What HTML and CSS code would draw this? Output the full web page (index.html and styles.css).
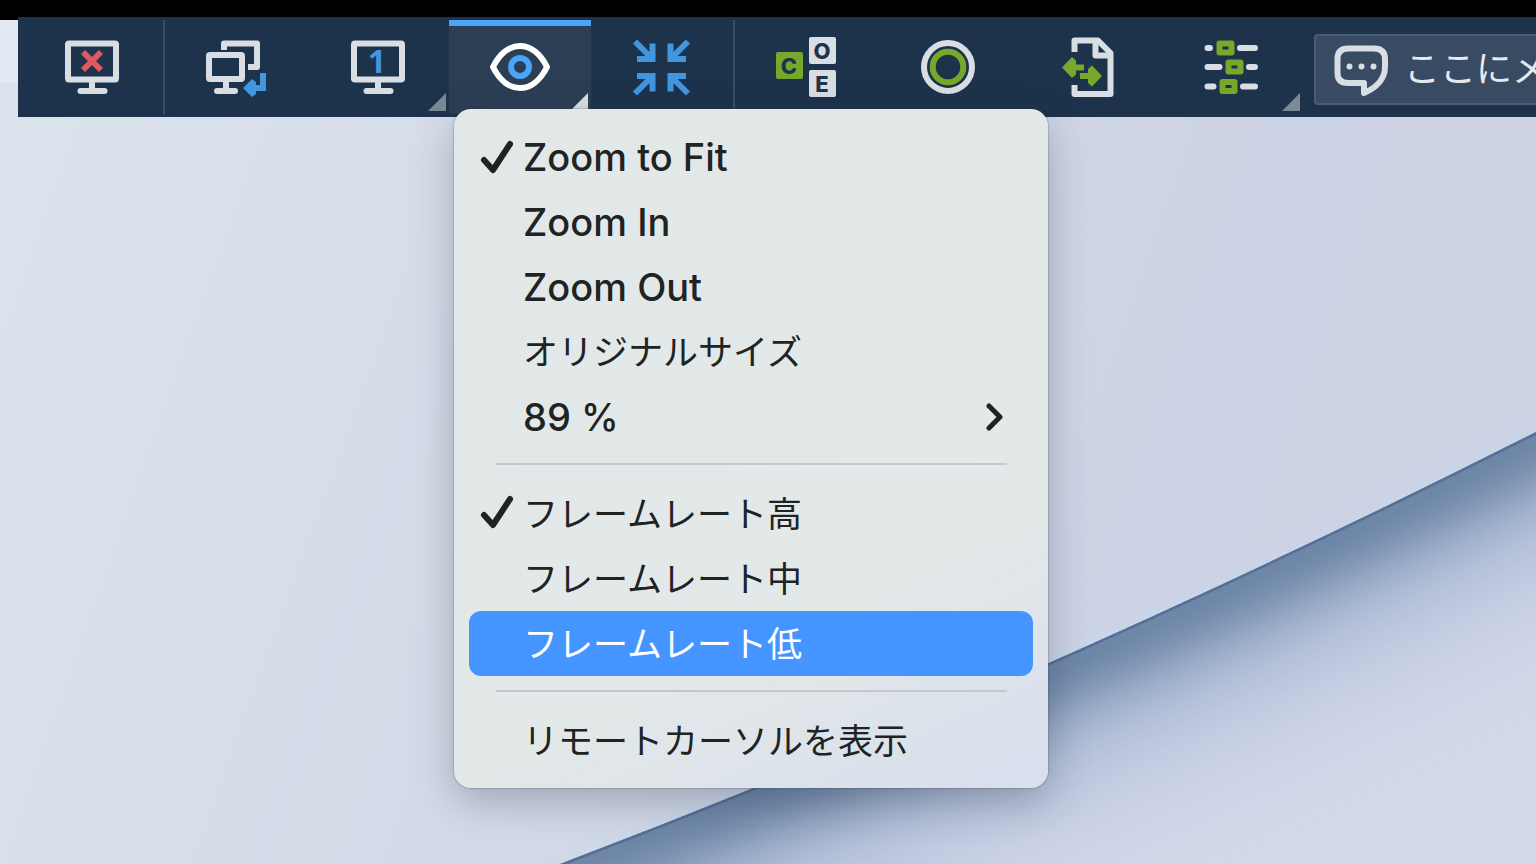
FILE: index.html
```html
<!DOCTYPE html>
<html lang="ja">
<head>
    <meta charset="UTF-8">
    <meta name="viewport" content="width=device-width, initial-scale=1.0">
    <title>Remote Control</title>
    <link rel="stylesheet" href="styles.css">
</head>
<body>
    <svg class="wallpaper" viewBox="0 0 1536 864" preserveAspectRatio="none" aria-hidden="true">
        <defs>
            <linearGradient id="sky" x1="0" y1="0.3" x2="1" y2="0.5">
                <stop offset="0" stop-color="#dae2ec"/>
                <stop offset="0.5" stop-color="#d2d9e7"/>
                <stop offset="0.8" stop-color="#ccd2e5"/>
                <stop offset="1" stop-color="#ccd1e4"/>
            </linearGradient>
            <filter id="soft" filterUnits="userSpaceOnUse" x="0" y="0" width="1900" height="1200"><feGaussianBlur stdDeviation="5"/></filter>
            <filter id="shade" filterUnits="userSpaceOnUse" x="0" y="0" width="1900" height="1200" color-interpolation-filters="sRGB"><feGaussianBlur stdDeviation="36"/></filter>
            <filter id="wide" filterUnits="userSpaceOnUse" x="0" y="0" width="1900" height="1200" color-interpolation-filters="sRGB"><feGaussianBlur stdDeviation="65"/></filter>
            <clipPath id="hill"><path d="M360 940L560 864Q1047 679 1536 432L1736 331V1000H360z"/></clipPath>
        </defs>
        <rect width="1536" height="864" fill="url(#sky)"/>
        <rect width="18" height="83" fill="#e3e9f4"/>
        <path d="M360 940L560 864Q1047 679 1536 432L1736 331" fill="none" stroke="#c8d8ec" stroke-width="10" opacity="0.7" filter="url(#soft)"/>
        <g clip-path="url(#hill)" fill="none">
            <rect x="360" y="300" width="1300" height="700" fill="#d3d8ea"/>
            <path d="M360 940L560 864Q1047 679 1536 432L1736 331" stroke="#a6b6d2" stroke-width="220" filter="url(#wide)"/>
            <path d="M360 940L560 864Q1047 679 1536 432L1736 331" stroke="#4d6b8e" stroke-width="66" filter="url(#shade)"/>
            <path d="M360 940L560 864Q1047 679 1536 432L1736 331" stroke="#4a6690" stroke-width="5" opacity="0.7"/>
        </g>
    </svg>

    <div class="screen-edge"></div>

    <div class="toolbar" role="toolbar">
        <button class="tool" aria-label="Disconnect">
            <svg class="icon" viewBox="0 0 60 60">
                <rect class="line" x="6" y="6.500" width="48" height="36" rx="1"/>
                <path class="line" d="M30 44v8"/>
                <path class="line round" d="M18.500 54h24"/>
                <path class="line red" d="M21 15l18 18M39 15L21 33"/>
            </svg>
        </button>
        <span class="divider"></span>
        <button class="tool" aria-label="Switch screen">
            <svg class="icon" viewBox="0 0 60 60">
                <path class="line" d="M18 13V6.500H51V30H42"/>
                <rect class="line" x="3" y="18" width="33" height="24" rx="1"/>
                <path class="line" d="M20 44v8"/>
                <path class="line round" d="M11 54h18"/>
                <path class="fill-blue" d="M37 51l9-9 4 3v3h4V36h6v18H50v3l-4 3z"/>
            </svg>
        </button>
        <button class="tool" aria-label="Monitor 1">
            <svg class="icon" viewBox="0 0 60 60">
                <rect class="line" x="6" y="6.500" width="48" height="36" rx="1"/>
                <path class="line" d="M30 44v8"/>
                <path class="line round" d="M18.500 54h24"/>
                <text class="digit" x="29" y="36">1</text>
            </svg>
            <span class="corner"></span>
        </button>
        <div class="tool-menu">
            <button class="tool active" aria-label="View" aria-haspopup="menu" aria-expanded="true">
                <svg class="icon" viewBox="0 0 60 60">
                    <path class="line white" d="M3 30C10 16 20 9 30 9S50 16 57 30C50 44 40 51 30 51S10 44 3 30z"/>
                    <circle class="line bright" cx="30" cy="30" r="9"/>
                </svg>
                <span class="corner"></span>
            </button>
            <div class="menu" role="menu">
                <button class="item" role="menuitemradio" aria-checked="true">
                    <span class="mark"><svg viewBox="0 0 34 34"><path d="M4 20l9 10L30 4"/></svg></span>Zoom to Fit
                </button>
                <button class="item" role="menuitem"><span class="mark"></span>Zoom In</button>
                <button class="item" role="menuitem"><span class="mark"></span>Zoom Out</button>
                <button class="item ja" role="menuitem"><span class="mark"></span>オリジナルサイズ</button>
                <button class="item" role="menuitem">
                    <span class="mark"></span>89 %
                    <svg class="chevron" viewBox="0 0 18 30"><path d="M3 4l11 11L3 26"/></svg>
                </button>
                <hr class="separator">
                <button class="item ja" role="menuitemradio" aria-checked="true">
                    <span class="mark"><svg viewBox="0 0 34 34"><path d="M4 20l9 10L30 4"/></svg></span>フレームレート高
                </button>
                <button class="item ja" role="menuitemradio" aria-checked="false"><span class="mark"></span>フレームレート中</button>
                <button class="item ja selected" role="menuitemradio" aria-checked="false"><span class="mark"></span>フレームレート低</button>
                <hr class="separator">
                <button class="item ja" role="menuitem"><span class="mark"></span>リモートカーソルを表示</button>
            </div>
        </div>
        <button class="tool" aria-label="Shrink">
            <svg class="icon" viewBox="0 0 60 60">
                <g id="arrow" class="line blue"><path d="M20.500 6.500V22H5M3 4.500L20 21.500"/></g>
                <use href="#arrow" transform="translate(59 0) scale(-1 1)"/>
                <use href="#arrow" transform="translate(0 61) scale(1 -1)"/>
                <use href="#arrow" transform="translate(59 61) scale(-1 -1)"/>
            </svg>
        </button>
        <span class="divider"></span>
        <button class="tool" aria-label="Keyboard">
            <svg class="icon" viewBox="0 0 60 60">
                <rect class="fill-green" y="15" width="27" height="27" rx="2"/>
                <rect class="fill-light" x="33" y="0" width="27" height="27" rx="2"/>
                <rect class="fill-light" x="33" y="33" width="27" height="27" rx="2"/>
                <text class="key" x="13" y="37">C</text>
                <text class="key" x="46" y="22">O</text>
                <text class="key" x="46" y="55">E</text>
            </svg>
        </button>
        <button class="tool" aria-label="Record">
            <svg class="icon" viewBox="0 0 60 60">
                <circle class="line" cx="30" cy="30" r="24"/>
                <circle class="line green" cx="30" cy="30" r="15.300"/>
            </svg>
        </button>
        <button class="tool" aria-label="File transfer">
            <svg class="icon" viewBox="0 0 60 60">
                <path class="line" d="M14.500 15V3.500H38L50.500 16V57H14.500V48"/>
                <path class="line" d="M35.500 3V18.500H51"/>
                <path class="fill-green" d="M2 30.500L12 20l4 3.500v4h8v6h-8v4L12 41zM42 39L32 28.500 28 32v4h-8v6h8v4l4 3.500z"/>
            </svg>
        </button>
        <button class="tool" aria-label="Settings">
            <svg class="icon" viewBox="0 0 60 60">
                <path class="line round" d="M5.500 11H8M38 11H53M5.500 30H17.500M47 30H53M5.500 49.500H11.500M41 49.500H53"/>
                <path class="line green" d="M17.500 6.500h12v9h-12zM26.500 25.500h12v9h-12zM20.500 45h12v9h-12z"/>
            </svg>
            <span class="corner"></span>
        </button>
        <label class="message">
            <svg class="bubble" viewBox="0 0 56 54" aria-hidden="true">
                <path class="line" d="M14 5.500H40Q51 5.500 51 16V24C51 36 42 45 30 50V40H14Q3.500 40 3.500 30V16Q3.500 5.500 14 5.500z"/>
                <path class="dots" d="M15.500 23.500h0M27.500 23.500h0M39.500 23.500h0"/>
            </svg>
            <input type="text" placeholder="ここにメ" aria-label="メッセージ">
        </label>
    </div>
</body>
</html>
```
FILE: styles.css
```css
* {
    box-sizing: border-box;
}

body {
    margin: 0;
    height: 100vh;
    overflow: hidden;
    font-family: Inter, "Noto Sans CJK JP", sans-serif;
    background: #d3d8ea;
}

button {
    border: none;
    margin: 0;
    font-family: inherit;
    background: none;
}

.wallpaper {
    position: absolute;
    top: 0;
    left: 0;
    width: 100%;
    height: 100%;
    z-index: -1;
}

.screen-edge {
    height: 20px;
    background: #000;
}

/* toolbar */
.toolbar {
    display: flex;
    height: 100px;
    margin: -3px 0 0 18px;
    padding: 3px 0 3px 3px;
    background: #1d324b;
}

.tool {
    position: relative;
    flex: none;
    display: flex;
    align-items: center;
    justify-content: center;
    width: 142px;
    height: 94px;
    padding: 0;
}

.tool.active {
    background: #2c3e54;
    box-shadow: inset 0 6px #4aa5f8;
}

.tool-menu {
    position: relative;
    flex: none;
}

.divider {
    flex: none;
    width: 2px;
    background: #384d66;
}

.corner {
    position: absolute;
    right: 3px;
    bottom: 3px;
    width: 18px;
    height: 18px;
    background: #7b8a98;
    clip-path: polygon(100% 0, 100% 100%, 0 100%);
}

.active .corner {
    background: #dcdfe1;
}

/* icons */
.icon {
    width: 60px;
    height: 60px;
}

.line {
    fill: none;
    stroke: #d9dde4;
    stroke-width: 6;
    stroke-linejoin: round;
}

.round {
    stroke-linecap: round;
}

.white {
    stroke: #fff;
}

.red {
    stroke: #dc5a60;
}

.blue {
    stroke: #4296de;
    stroke-linejoin: miter;
}

.bright {
    stroke: #4aa5f8;
}

.green {
    stroke: #76a82b;
}

.fill-blue {
    fill: #4296de;
}

.fill-green {
    fill: #76a82b;
}

.fill-light {
    fill: #d9dde4;
}

.digit {
    font: 700 32px "Open Sans", sans-serif;
    text-anchor: middle;
    fill: #4296de;
}

.key {
    font: 800 22px Inter, sans-serif;
    text-anchor: middle;
    fill: #1d324b;
}

/* message box */
.message {
    flex: 1;
    min-width: 0;
    display: flex;
    align-items: center;
    gap: 14px;
    margin: 14px 0 9px 11px;
    padding-left: 18px;
    border: 2px solid #4a5d74;
    border-right: none;
    border-radius: 4px 0 0 4px;
    background: #384b62;
}

.bubble {
    flex: none;
    width: 56px;
    height: 54px;
}

.dots {
    stroke: #d9dde4;
    stroke-width: 6;
    stroke-linecap: round;
}

.message input {
    flex: 1;
    min-width: 0;
    padding: 0 0 8px;
    border: none;
    outline: none;
    font: 400 36px "Noto Sans CJK JP", sans-serif;
    color: #e6e9ee;
    background: none;
}

.message input::placeholder {
    color: #e6e9ee;
    opacity: 1;
}

/* drop-down menu */
.menu {
    position: absolute;
    top: 89px;
    left: 5px;
    width: 594px;
    padding: 15px;
    border-radius: 17px;
    background: linear-gradient(155deg, #e2e8e7 0%, #e3e9e8 70%, #d9dfec 95%);
    box-shadow: 0 0 2px rgba(30, 40, 60, 0.6), 0 14px 40px rgba(40, 50, 70, 0.3);
    z-index: 1;
}

.item {
    display: flex;
    align-items: center;
    width: 100%;
    height: 65px;
    padding: 0 29px 0 11px;
    border-radius: 12px;
    font-size: 38px;
    font-weight: 450;
    color: #202324;
    text-align: left;
    white-space: nowrap;
}

.item.ja {
    padding-bottom: 4px;
    font-family: "Noto Sans CJK JP", sans-serif;
    font-size: 35px;
    font-weight: 400;
}

.item.selected {
    color: #fff;
    background: #4495ff;
}

.mark {
    flex: none;
    display: flex;
    width: 43px;
}

.mark svg {
    width: 34px;
    height: 34px;
}

.mark path,
.chevron path {
    fill: none;
    stroke: #202324;
    stroke-width: 5;
    stroke-linecap: round;
    stroke-linejoin: round;
}

.mark path {
    stroke-width: 6;
}

.chevron {
    width: 18px;
    height: 30px;
    margin-left: auto;
}

.separator {
    height: 2px;
    margin: 14px 26px 16px 27px;
    border: none;
    background: #c3c9cb;
}
```
